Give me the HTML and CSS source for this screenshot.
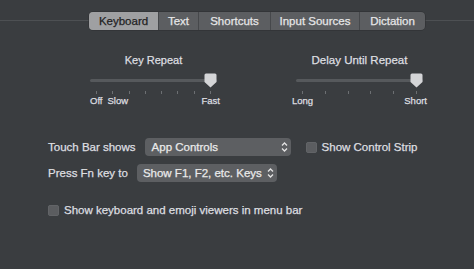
FILE: index.html
```html
<!DOCTYPE html>
<html lang="en">
<head>
    <meta charset="UTF-8">
    <meta name="viewport" content="width=device-width, initial-scale=1.0">
    <title>Keyboard</title>
    <link rel="stylesheet" href="styles.css">
</head>
<body>

<!-- Tab bar -->
<div class="header">
    <div class="tabs">
        <div class="tab active">Keyboard</div>
        <div class="tab">Text</div>
        <div class="tab">Shortcuts</div>
        <div class="tab">Input Sources</div>
        <div class="tab">Dictation</div>
    </div>
</div>

<!-- Sliders -->
<div class="sliders">
    <div class="slider-group repeat">
        <div class="slider-title">Key Repeat</div>
        <div class="slider">
            <div class="track"></div>
            <svg class="thumb" width="13" height="15" viewBox="0 0 13 15"><path d="M2 0.5 H11 A1.5 1.5 0 0 1 12.5 2 V9 L6.5 14.5 L0.5 9 V2 A1.5 1.5 0 0 1 2 0.5 Z" fill="#d4d5d7"/></svg>
        </div>
        <div class="ticks">
            <span></span><span></span><span></span><span></span><span></span><span></span><span></span><span></span>
        </div>
        <div class="labels">
            <div class="left-labels"><span>Off</span><span>Slow</span></div>
            <span>Fast</span>
        </div>
    </div>
    <div class="slider-group delay">
        <div class="slider-title">Delay Until Repeat</div>
        <div class="slider">
            <div class="track"></div>
            <svg class="thumb" width="13" height="15" viewBox="0 0 13 15"><path d="M2 0.5 H11 A1.5 1.5 0 0 1 12.5 2 V9 L6.5 14.5 L0.5 9 V2 A1.5 1.5 0 0 1 2 0.5 Z" fill="#d4d5d7"/></svg>
        </div>
        <div class="ticks">
            <span></span><span></span><span></span><span></span><span></span><span></span>
        </div>
        <div class="labels">
            <span>Long</span>
            <span>Short</span>
        </div>
    </div>
</div>

<!-- Options -->
<div class="options">
    <div class="row">
        <span class="row-label">Touch Bar shows</span>
        <div class="popup touch">
            <span>App Controls</span>
            <svg width="7" height="10" viewBox="0 0 7 10"><path d="M1 3.5 L3.5 1 L6 3.5 M1 6.5 L3.5 9 L6 6.5" fill="none" stroke="#e4e4e4" stroke-width="1.3"/></svg>
        </div>
        <label class="check strip"><span class="box"></span>Show Control Strip</label>
    </div>
    <div class="row">
        <span class="row-label">Press Fn key to</span>
        <div class="popup fn">
            <span>Show F1, F2, etc. Keys</span>
            <svg width="7" height="10" viewBox="0 0 7 10"><path d="M1 3.5 L3.5 1 L6 3.5 M1 6.5 L3.5 9 L6 6.5" fill="none" stroke="#e4e4e4" stroke-width="1.3"/></svg>
        </div>
    </div>
    <label class="check viewers"><span class="box"></span>Show keyboard and emoji viewers in menu bar</label>
</div>

</body>
</html>
```

FILE: styles.css
```css
body {
    margin: 0;
    background-color: #3a3d40;
    color: #dedfe0;
    font-family: "Liberation Sans", Arial, sans-serif;
    font-size: 11.5px;
    -webkit-text-stroke: 0.25px;
}
.header {
    padding-top: 12px;
    height: 30px;
    background: linear-gradient(transparent 20px, #4d5053 20px, #4d5053 21px, transparent 21px);
}
.tabs {
    display: flex;
    margin-left: 89px;
    width: 336px;
    height: 18px;
    border-radius: 4px;
    overflow: hidden;
    background-color: #5c5e61;
    box-shadow: 0 0 0 0.5px #2c2e30;
}
.tab {
    display: flex;
    align-items: center;
    justify-content: center;
    color: #e6e6e7;
    border-left: 1px solid #46484b;
}
.tab:nth-child(1) { width: 69px; border-left: none; }
.tab:nth-child(2) { width: 39px; }
.tab:nth-child(3) { width: 71px; }
.tab:nth-child(4) { width: 88px; }
.tab:nth-child(5) { width: 65px; }
.tab.active {
    background-color: #9fa0a2;
    color: #222;
}
.sliders {
    display: flex;
    gap: 79px;
    padding-left: 90px;
    margin-top: 10px;
}
.slider-group {
    width: 127px;
}
.slider-title {
    text-align: center;
    line-height: 16px;
    height: 16px;
}
.repeat .slider-title { font-size: 11px; }
.slider {
    position: relative;
    height: 16px;
    margin-top: 5px;
}
.track {
    position: absolute;
    left: 0;
    right: 0;
    top: 6px;
    height: 3px;
    border-radius: 2px;
    background-color: #56595c;
}
.thumb {
    position: absolute;
    top: 0;
    right: 0;
}
.ticks {
    display: flex;
    justify-content: space-between;
    padding: 0 6px 0 6px;
    margin-top: 2px;
    height: 3px;
}
.ticks span {
    width: 1px;
    height: 3px;
    background-color: #6c6f72;
}
.labels {
    display: flex;
    justify-content: space-between;
    font-size: 9.5px;
    margin-top: 2px;
    line-height: 10px;
}
.repeat .labels { margin-right: -3px; }
.delay .labels { margin-left: -4px; margin-right: -4px; }
.left-labels {
    display: flex;
    gap: 5px;
}
.options {
    padding-left: 48px;
    margin-top: 32px;
}
.row {
    display: flex;
    align-items: center;
    height: 18px;
    margin-bottom: 8px;
}
.row-label {
    margin-right: 9px;
}
.popup {
    display: flex;
    align-items: center;
    justify-content: space-between;
    height: 18px;
    box-sizing: border-box;
    padding: 0 2px 0 7px;
    border-radius: 4px;
    background-color: #5d5f62;
    color: #eaeaea;
}
.popup svg { margin-right: 1px; -webkit-text-stroke: 0; }
.popup.touch { width: 146px; }
.popup.fn { width: 140px; padding-left: 6px; }
.check {
    display: flex;
    align-items: center;
    gap: 5px;
}
.box {
    width: 11px;
    height: 11px;
    border-radius: 3px;
    background-color: #5b5d60;
    box-shadow: inset 0 0 0 0.5px #6a6c6f;
}
.check.strip { margin-left: 15px; }
.check.viewers { margin-top: 21px; height: 14px; }
```
